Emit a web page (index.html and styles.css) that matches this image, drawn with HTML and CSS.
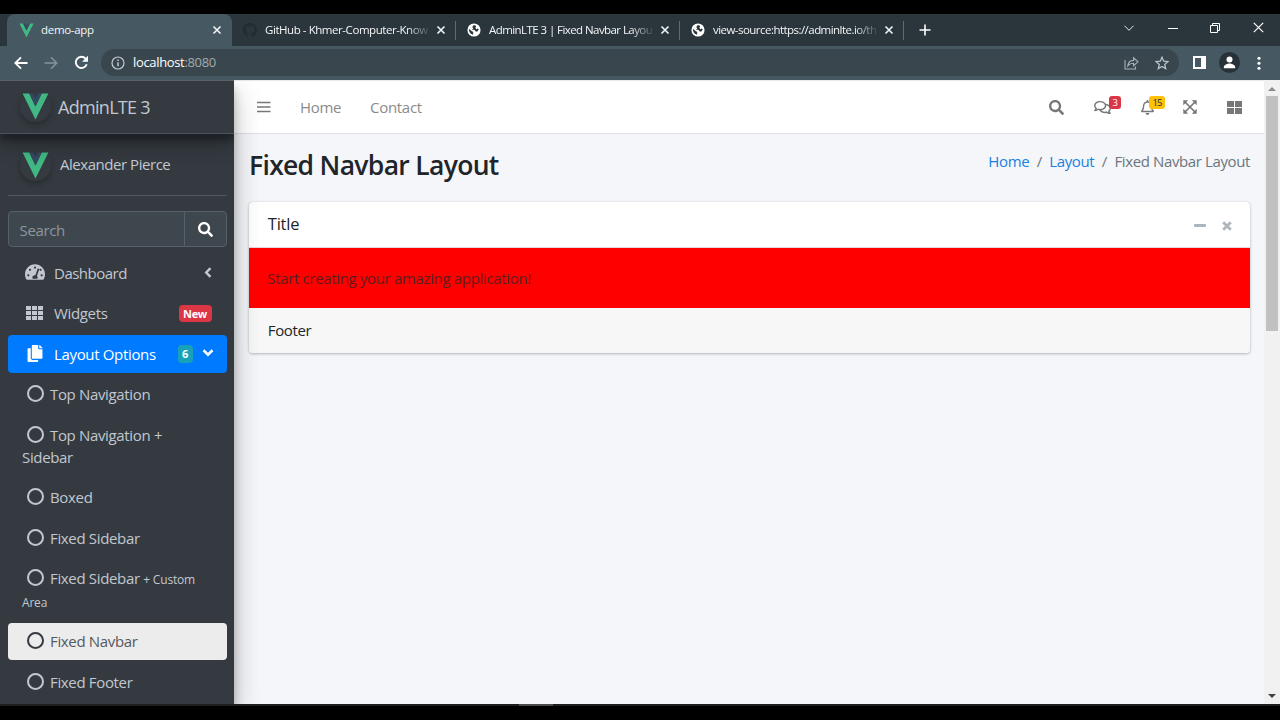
FILE: index.html
```html
<!DOCTYPE html>
<html lang="en">
<head>
<meta charset="utf-8">
<title>demo-app</title>
<link rel="stylesheet" href="styles.css">
</head>
<body>
<svg class="defs" width="0" height="0">
  <symbol id="vue" viewBox="0 0 30 30"><path d="M2.500 2.500h6.500l6 12.500 6-12.500h6.500L15 27.500z" fill="#41b883"/><path d="M9 2.500h3.500l2.500 4.500 2.500-4.500H21l-6 12.500z" fill="#34495e"/></symbol>
  <symbol id="x" viewBox="0 0 10 10"><path d="M1.500 1.500l7 7M8.500 1.500l-7 7" stroke="currentColor" stroke-width="1.600" fill="none"/></symbol>
  <symbol id="globe" viewBox="0 0 16 16"><circle cx="8" cy="8" r="7.500" fill="#fff"/><path d="M2.200 6.500l3.300 3 1.500.6v3.200C4 12.800 2 10.500 2.200 6.500zM7.500 2.600L6 4.700l1.300 1.500L5.500 7.300 8.700 8l1.200 1.800 2-.2 1.500-2.200-1.200-1-1.500.6-1.200-1.600 1-1.500-1.300-1.300z" fill="#29343a"/></symbol>
  <symbol id="search" viewBox="0 0 512 512"><path fill="currentColor" d="M505 442.700L405.300 343c-4.500-4.500-10.600-7-17-7H372c27.600-35.300 44-79.700 44-128C416 93.100 322.900 0 208 0S0 93.100 0 208s93.100 208 208 208c48.300 0 92.700-16.400 128-44v16.300c0 6.400 2.500 12.500 7 17l99.700 99.700c9.400 9.400 24.600 9.400 33.900 0l28.300-28.300c9.400-9.400 9.400-24.600.1-34zM208 336c-70.700 0-128-57.200-128-128 0-70.700 57.200-128 128-128 70.700 0 128 57.200 128 128 0 70.700-57.200 128-128 128z"/></symbol>
</svg>

<header class="browser">
  <div class="tabstrip">
    <div class="tab active">
      <svg class="fav big" viewBox="0 0 30 30"><use href="#vue"/></svg><span class="tab-title t1">demo-app</span><svg class="close"><use href="#x"/></svg>
    </div>
    <div class="tab w2">
      <svg class="fav" viewBox="0 0 16 16"><path fill="#222b30" d="M8 0C3.580 0 0 3.580 0 8c0 3.540 2.290 6.530 5.470 7.590.4.070.55-.17.55-.38 0-.19-.01-.82-.01-1.490-2.010.37-2.530-.49-2.690-.94-.09-.23-.48-.94-.82-1.130-.28-.15-.68-.52-.01-.53.63-.01 1.080.58 1.230.82.72 1.210 1.870.87 2.330.66.07-.52.28-.87.51-1.070-1.780-.2-3.640-.89-3.640-3.950 0-.87.31-1.590.82-2.150-.08-.2-.36-1.020.08-2.120 0 0 .67-.21 2.200.82.64-.18 1.320-.27 2-.27s1.360.09 2 .27c1.530-1.040 2.200-.82 2.200-.82.44 1.100.16 1.920.08 2.120.51.56.82 1.270.82 2.150 0 3.070-1.870 3.750-3.650 3.950.29.25.54.73.54 1.480 0 1.070-.01 1.930-.01 2.200 0 .21.15.46.55.38A8 8 0 0 0 16 8c0-4.420-3.580-8-8-8z"/></svg><span class="tab-title fade t2">GitHub - Khmer-Computer-Know</span><svg class="close"><use href="#x"/></svg>
    </div>
    <div class="tab w3">
      <svg class="fav"><use href="#globe"/></svg><span class="tab-title fade t3">AdminLTE 3 | Fixed Navbar Layou</span><svg class="close"><use href="#x"/></svg>
    </div>
    <div class="tab w4">
      <svg class="fav"><use href="#globe"/></svg><span class="tab-title fade t4">view-source:https://adminlte.io/th</span><svg class="close"><use href="#x"/></svg>
    </div>
    <svg class="plus" viewBox="0 0 12 12"><path d="M6 .5v11M.5 6h11" stroke="#fff" stroke-width="1.600"/></svg>
    <div class="window">
      <svg width="12" height="8" viewBox="0 0 12 8"><path d="M1.500 1.800l4.500 4.500 4.500-4.500" fill="none" stroke="#e8eaeb" stroke-width="1"/></svg>
      <svg width="10" height="10" viewBox="0 0 10 10"><path d="M0 5.500h10" stroke="#fff"/></svg>
      <svg width="10" height="10" viewBox="0 0 10 10"><path d="M.5 2.500h7v7h-7zM2.500 2V.5h7v7H8" fill="none" stroke="#fff"/></svg>
      <svg width="11" height="11" viewBox="0 0 11 11"><path d="M.8.8l9.400 9.400M10.200.8L.8 10.200" stroke="#fff" stroke-width="1.200"/></svg>
    </div>
  </div>
  <div class="toolbar">
    <svg width="14" height="14" viewBox="0 0 14 14"><path d="M13.500 7H1.500M7 1.300L1.300 7 7 12.700" fill="none" stroke="#fff" stroke-width="1.800"/></svg>
    <svg width="14" height="14" viewBox="0 0 14 14"><path d="M.5 7h12M7 1.300L12.700 7 7 12.700" fill="none" stroke="#87939a" stroke-width="1.600"/></svg>
    <svg width="15" height="15" viewBox="0 0 15 15"><path d="M12.700 9.200A5.600 5.600 0 1 1 11.600 3.600" fill="none" stroke="#fff" stroke-width="1.900"/><path d="M14 .8v5.900H8.100z" fill="#fff"/></svg>
    <div class="omnibox">
      <svg width="14" height="14" viewBox="0 0 14 14"><circle cx="7" cy="7" r="6" fill="none" stroke="#c3c9cc" stroke-width="1.200"/><path d="M7 6.200v4M7 3.500v1.600" stroke="#c3c9cc" stroke-width="1.500"/></svg>
      <span class="url">localhost<span class="port">:8080</span></span>
      <svg class="share" width="15" height="14" viewBox="0 0 15 14"><path d="M1 4v9h10.500v-2.500M3.800 9.800c.4-3.600 2.400-5.300 5.800-5.400V1.800l4.400 4-4.400 3.900V7.200C7 7.200 5.200 8 3.800 9.800z" fill="none" stroke="#aab3b7" stroke-width="1.100"/></svg>
      <svg width="14" height="14" viewBox="0 0 14 14"><path d="M7 1.200l1.700 4 4.300.4-3.300 2.800 1 4.200L7 10.400l-3.700 2.200 1-4.200L1 5.600l4.300-.4z" fill="none" stroke="#bbc2c6" stroke-width="1.300"/></svg>
    </div>
    <svg class="panel" width="13" height="13" viewBox="0 0 13 13"><path d="M0 0h13v13H0zM2 2v9h6V2z" fill="#fff" fill-rule="evenodd"/></svg>
    <svg class="avatar" width="21" height="21" viewBox="0 0 21 21"><circle cx="10.500" cy="10.500" r="10.500" fill="#263138"/><circle cx="10.500" cy="7.500" r="3" fill="#fff"/><path d="M4.800 15.500c0-3 3.800-4 5.700-4s5.700 1 5.700 4v.7H4.800z" fill="#fff"/></svg>
    <svg class="dots" width="4" height="14" viewBox="0 0 4 14"><g fill="#fff"><circle cx="2" cy="2.200" r="1.550"/><circle cx="2" cy="7.200" r="1.550"/><circle cx="2" cy="12.200" r="1.550"/></g></svg>
  </div>
</header>

<div class="page">
  <aside class="sidebar">
    <div class="brand"><svg class="logo"><use href="#vue"/></svg><span>AdminLTE 3</span></div>
    <div class="side-body">
      <div class="user"><svg class="logo"><use href="#vue"/></svg><span>Alexander Pierce</span></div>
      <div class="search"><span class="field">Search</span><span class="go"><svg width="15" height="15"><use href="#search"/></svg></span></div>
      <nav class="menu">
        <a class="item"><svg class="ico" width="20" height="18" viewBox="0 0 576 512"><path fill="currentColor" fill-rule="evenodd" d="M288 32C128.940 32 0 160.940 0 320c0 52.800 14.250 102.260 39.060 144.800 5.610 9.620 16.300 15.200 27.440 15.200h443c11.140 0 21.830-5.580 27.440-15.200C561.750 422.260 576 372.800 576 320c0-159.060-128.940-288-288-288zM288 96a32 32 0 1 1 0 64 32 32 0 0 1 0-64zM96 384a32 32 0 1 1 0-64 32 32 0 0 1 0 64zM144 224a32 32 0 1 1 0-64 32 32 0 0 1 0 64zM391 156a24 24 0 0 1 15 30l-61 184c15 14 25 34 18 62-4 10-8 16-8 16H221s-5-8-7-16c-10-40 20-79 63-80h22l61-182a24 24 0 0 1 31-14zM448 224a32 32 0 1 1 0-64 32 32 0 0 1 0 64zM480 384a32 32 0 1 1 0-64 32 32 0 0 1 0 64z"/></svg><span class="m1">Dashboard</span><svg class="arrow" width="8" height="11" viewBox="0 0 8 11"><path d="M6.500 1.200L2.200 5.500l4.300 4.300" fill="none" stroke="currentColor" stroke-width="2.400"/></svg></a>
        <a class="item"><svg class="ico" width="20" height="16" viewBox="0 0 20 16"><path fill="currentColor" d="M1 1h5v4H1zM7 1h5v4H7zM13 1h5v4h-5zM1 6h5v4H1zM7 6h5v4H7zM13 6h5v4h-5zM1 11h5v4H1zM7 11h5v4H7zM13 11h5v4h-5z"/></svg><span class="m2">Widgets</span><b class="badge new">New</b></a>
        <a class="item on"><svg class="ico" width="20" height="17" viewBox="0 0 448 512"><path fill="currentColor" d="M320 448v40c0 13.255-10.745 24-24 24H24c-13.255 0-24-10.745-24-24V120c0-13.255 10.745-24 24-24h72v296c0 30.879 25.121 56 56 56h168zm0-344V0H152c-13.255 0-24 10.745-24 24v368c0 13.255 10.745 24 24 24h272c13.255 0 24-10.745 24-24V128H344c-13.200 0-24-10.800-24-24zm120.971-31.029L375.029 7.029A24 24 0 0 0 358.059 0H352v96h96v-6.059a24 24 0 0 0-7.029-16.970z"/></svg><span class="m3">Layout Options</span><b class="badge six">6</b><svg class="arrow down" width="12" height="8" viewBox="0 0 12 8"><path d="M1.500 1.300L6 5.600l4.500-4.300" fill="none" stroke="currentColor" stroke-width="2.600"/></svg></a>
        <a class="item sub"><i class="ring"></i><span>Top Navigation</span></a>
        <a class="item sub"><i class="ring"></i><span>Top Navigation +<br>Sidebar</span></a>
        <a class="item sub"><i class="ring"></i><span>Boxed</span></a>
        <a class="item sub"><i class="ring"></i><span>Fixed Sidebar</span></a>
        <a class="item sub"><i class="ring"></i><span>Fixed Sidebar <small>+ Custom<br>Area</small></span></a>
        <a class="item sub current"><i class="ring"></i><span>Fixed Navbar</span></a>
        <a class="item sub"><i class="ring"></i><span>Fixed Footer</span></a>
      </nav>
    </div>
  </aside>

  <main class="main">
    <nav class="navbar">
      <svg class="bars" width="14" height="13" viewBox="0 0 14 13"><path d="M0 1.500h13.500M0 6h13.500M0 10.500h13.500" stroke="currentColor" stroke-width="1.700"/></svg>
      <a class="n-home">Home</a><a class="n-contact">Contact</a>
      <div class="tools">
        <svg width="15" height="15"><use href="#search"/></svg>
        <span class="notify"><svg width="17" height="15" viewBox="0 0 576 512"><path fill="currentColor" d="M532 386.200c27.500-27.100 44-61.100 44-98.200 0-80-76.500-146.100-176.200-157.900C368.300 72.500 294.300 32 208 32 93.100 32 0 103.600 0 192c0 37 16.500 71 44 98.200-15.300 30.700-37.300 54.500-37.700 54.900-6.300 6.700-8.100 16.500-4.400 25 3.600 8.500 12 14 21.200 14 53.500 0 96.700-20.200 125.200-38.800 9.200 2.100 18.700 3.700 28.400 4.900C208.100 407.600 281.800 448 368 448c20.800 0 40.800-2.400 59.800-6.800C456.300 459.700 499.400 480 553 480c9.200 0 17.500-5.500 21.200-14 3.600-8.500 1.900-18.300-4.400-25-.4-.3-22.500-24.100-37.800-54.800zm-392.800-92.300L122.100 305c-14.100 9.100-28.500 16.300-43.100 21.400 2.700-4.700 5.400-9.700 8-14.800l15.500-31.100L77.700 256C64.200 242.600 48 220.700 48 192c0-60.700 73.300-112 160-112s160 51.300 160 112-73.300 112-160 112c-16.500 0-33-1.900-49-5.600l-19.800-4.500zM498.300 352l-24.700 24.400 15.500 31.100c2.600 5.100 5.300 10.100 8 14.800-14.600-5.100-29-12.300-43.100-21.400l-17.100-11.100-19.900 4.600c-16 3.700-32.500 5.600-49 5.600-54 0-102.200-20.100-131.300-49.700C338 339.500 416 272.900 416 192c0-3.400-.4-6.700-.7-10C479.700 196.500 528 238.800 528 288c0 28.700-16.200 50.600-29.700 64z"/></svg><b class="pip red">3</b></span>
        <span class="notify bell"><svg width="13" height="15" viewBox="0 0 448 512"><path fill="currentColor" d="M439.390 362.290c-19.320-20.760-55.470-51.990-55.470-154.290 0-77.700-54.480-139.900-127.940-155.160V32c0-17.670-14.320-32-31.980-32s-31.980 14.330-31.980 32v20.840C118.560 68.100 64.080 130.300 64.080 208c0 102.300-36.150 133.530-55.470 154.290-6 6.450-8.660 14.160-8.610 21.710.11 16.400 12.980 32 32.100 32h383.800c19.120 0 32-15.600 32.100-32 .05-7.550-2.610-15.270-8.610-21.710zM67.530 368c21.220-27.970 44.420-74.330 44.530-159.420 0-.2-.06-.38-.06-.58 0-61.860 50.140-112 112-112s112 50.140 112 112c0 .2-.06.38-.06.58.11 85.100 23.310 131.460 44.530 159.420H67.530zM224 512c35.320 0 63.970-28.650 63.970-64H160.030c0 35.350 28.650 64 63.970 64z"/></svg><b class="pip yellow">15</b></span>
        <svg class="expand" width="14" height="14" viewBox="0 0 14 14"><path d="M2 2l10 10M12 2L2 12" stroke="currentColor" stroke-width="1.700"/><path fill="currentColor" d="M.3.3h4.900L.3 5.200zM13.700.3v4.900L8.800.3zM.3 13.700V8.800l4.900 4.900zM13.700 13.700H8.800l4.900-4.900z"/></svg>
        <svg class="grid" width="15" height="13" viewBox="0 0 15 13"><path fill="currentColor" d="M0 0h7v6H0zM8 0h7v6H8zM0 7h7v6H0zM8 7h7v6H8z"/></svg>
      </div>
    </nav>
    <section class="content">
      <div class="head">
        <h1>Fixed Navbar Layout</h1>
        <div class="crumbs"><a class="c1">Home</a><span class="slash">/</span><a class="c2">Layout</a><span class="slash">/</span><span class="c3">Fixed Navbar Layout</span></div>
      </div>
      <div class="card">
        <div class="card-head"><span class="c-title">Title</span><svg class="minus" width="12" height="3"><rect width="12" height="3" rx="1" fill="#adb5bd"/></svg><svg class="card-x" width="10" height="10" viewBox="0 0 10 10"><path d="M1.200 1.200l7.600 7.600M8.800 1.200L1.200 8.800" stroke="#adb5bd" stroke-width="2.800"/></svg></div>
        <div class="card-body"><span class="c-body">Start creating your amazing application!</span></div>
        <div class="card-foot"><span class="c-foot">Footer</span></div>
      </div>
    </section>
  </main>
  <div class="scrollbar"><i class="up"></i><i class="thumb"></i><i class="dn"></i></div>
</div>
<footer class="taskbar"><i></i></footer>
</body>
</html>
```
FILE: styles.css
```css
* { box-sizing: border-box; }
body { margin: 0; width: 1280px; height: 720px; overflow: hidden; background: #000; padding-top: 14px; font: 15px/22.5px "Open Sans", "Noto Sans", sans-serif; letter-spacing: -0.34px; color: #212529; }
svg { display: block; flex: none; }
.defs { position: absolute; }
span, a, b, h1 { white-space: nowrap; }

.browser { height: 66px; background: #465962; }
.tabstrip { height: 32px; display: flex; align-items: center; background: #2b363c; padding-left: 7px; }
.tab { position: relative; height: 32px; width: 225px; display: flex; align-items: center; color: #f4f5f6; font-size: 11.5px; letter-spacing: -0.44px; padding: 0 10px 0 12px; }
.tab.active { background: #465962; border-radius: 8px 8px 0 0; letter-spacing: -0.3px; }
.fav { width: 14px; height: 14px; margin-right: 8px; }
.big { width: 17px; height: 17px; margin: 0 6px 0 -1px; }
.w2, .w3, .w4 { height: 19px; border-right: 1px solid #606b71; }
.w2 { width: 224px; padding-left: 11px; padding-right: 9px; }
.w3 { width: 224px; padding-left: 11px; padding-right: 9px; letter-spacing: -.57px; }
.w4 { width: 224px; padding-right: 9px; padding-left: 11px; letter-spacing: -.54px; }
.tab-title { flex: 1; overflow: hidden; }
.fade { -webkit-mask-image: linear-gradient(90deg, #000 87%, transparent 102%); mask-image: linear-gradient(90deg, #000 87%, transparent 102%); }
.close { width: 10px; height: 10px; margin-left: 8px; color: #f2f4f5; }
.plus { width: 12px; height: 12px; margin-left: 15px; }
.window { margin-left: auto; display: flex; align-items: center; justify-content: space-between; width: 141px; margin-right: 16px; padding-bottom: 5px; }
.toolbar { height: 34px; display: flex; align-items: center; padding: 0 18px 1px 14px; gap: 16px; }
.omnibox { height: 27px; width: 1078px; margin-left: -4px; border-radius: 14px; background: #39464d; display: flex; align-items: center; padding: 0 10px; }
.url { margin-left: 8px; color: #fff; font-size: 13px; letter-spacing: -0.34px; flex: 1; }
.port { color: #a1aaaf; }
.share { margin-right: 16px; }
.panel { margin-left: -2px; }
.avatar { margin: 0 0 0 -3px; }
.dots { margin-left: 1px; }

.page { display: flex; height: 624px; background: #f4f6f9; }
.sidebar { position: relative; z-index: 2; width: 234px; height: 624px; overflow: hidden; background: #343a40; color: #c2c7d0; box-shadow: 0 13px 26px rgba(0,0,0,.25), 0 9px 9px rgba(0,0,0,.22); clip-path: inset(0 -40px 0 0); }
.brand { position: relative; height: 54px; border-bottom: 1px solid #4b545c; border-top: 1px solid #59646a; display: flex; align-items: center; padding-left: 20px; font-size: 18px; letter-spacing: -0.7px; box-shadow: 0 10px 20px rgba(0,0,0,.3), 0 6px 6px rgba(0,0,0,.25); background: #343a40; }
.logo { width: 31px; height: 31px; border-radius: 50%; margin-right: 7px; margin-top: -2px; box-shadow: 0 3px 6px rgba(0,0,0,.25); overflow: visible; }
.side-body { padding: 0 7.5px; }
.user { height: 62px; display: flex; align-items: center; padding: 0 0 0 12.5px; border-bottom: 1px solid #4f5962; letter-spacing: -.46px; }
.user .logo { margin: 1px 9px 0 0; }
.search { display: flex; height: 36px; margin: 15px 0 7.5px; background: #3f474e; border: 1px solid #56606a; border-radius: 4px; color: #8e959c; align-items: center; }
.field { flex: 1; padding: 2px 0 0 11px; }
.go { width: 42px; height: 34px; border-left: 1px solid #56606a; color: #fff; display: flex; align-items: center; justify-content: center; }
.item { display: flex; align-items: center; position: relative; padding: 7.5px 15px 7.5px 14.5px; margin-bottom: 2.9px; border-radius: 4px; }
.item .ico { margin: -2px 9px 0 3px; }
.on { background: #007bff; color: #fff; }
.m1 { letter-spacing: -.5px; }
.arrow { margin-left: auto; margin-top: -2px; }
.badge { font-size: 11px; line-height: 11.250px; padding: 3px 4.500px; border-radius: 4px; color: #fff; letter-spacing: -.3px; }
.new { background: #dc3545; margin-left: auto; }
.six { background: #17a2b8; margin-left: auto; }
.down { margin-left: 9px; margin-right: -2px; }
.sub { display: block; }
.ring { display: inline-block; vertical-align: -2px; width: 17px; height: 17px; border: 2px solid currentColor; border-radius: 50%; margin: 0 6px 0 5px; }
small { font-size: 12px; line-height: 0; letter-spacing: -.2px; }
.current { background: #ececed; color: #55595d; }
.current .ring { border-color: #343a40; }

.main { flex: 1; min-width: 0; }
.navbar { height: 54px; background: #fff; border-bottom: 1px solid #dee2e6; border-top: 1px solid #e7eaec; display: flex; align-items: center; color: #8a8a8a; padding: 0 22px 0 23px; }
.bars { color: #777; }
.n-home { margin-left: 29px; }
.n-contact { margin-left: 29px; letter-spacing: -.3px; }
.tools { margin-left: auto; display: flex; align-items: center; color: #777; }
.notify { position: relative; margin-left: 30px; }
.pip { position: absolute; top: -4px; left: 15px; height: 13px; padding: 0 3.500px; border-radius: 3px; font-size: 9.5px; line-height: 13px; font-weight: 400; color: #fff; }
.red { background: #dc3545; }
.yellow { background: #ffc107; color: #1f2d3d; left: 8px; letter-spacing: -.9px; }
.expand { margin-left: 29px; }
.grid { margin-left: 30px; }
.content { padding: 0 14px 0 15px; }
.head { display: flex; justify-content: space-between; height: 68px; }
h1 { margin: 13px 0 0; font-size: 26.5px; line-height: 36px; font-weight: 600; letter-spacing: -.69px; }
.crumbs { display: flex; color: #6c757d; margin-top: 16px; height: 23px; letter-spacing: -.38px; }
.crumbs a { color: #1a7fe0; }
.slash { margin: 0 7.500px; }
.card { border-radius: 4px; overflow: hidden; box-shadow: 0 0 1px rgba(0,0,0,.2), 0 1px 3px rgba(0,0,0,.25); background: #fff; }
.card-head { height: 46px; display: flex; align-items: center; padding: 0 18px 0 18.750px; border-bottom: 1px solid #ead5d8; font-size: 16.500px; letter-spacing: -.2px; }
.c-title { flex: 1; }
.minus { margin-top: 2px; }
.card-x { margin: 2px 0 0 16px; }
.card-body { height: 60px; background: #f00; padding: 19px 18.750px; color: #212529; }
.card-body span { opacity: .75; }
.card-foot { height: 45px; background: #f7f7f7; padding: 11px 18.750px; }
.scrollbar { width: 16px; background: #f1f1f1; display: flex; flex-direction: column; align-items: center; }
.up { border: 4px solid transparent; border-top: 0; border-bottom: 4px solid #8c8c8c; margin: 7px 0 5px; }
.thumb { width: 12px; height: 235px; background: #c1c1c1; }
.dn { border: 4px solid transparent; border-bottom: 0; border-top: 4px solid #404040; margin: auto 0 6px; }
.taskbar { height: 2px; background: #1e1e1e; padding-left: 519px; }
.taskbar i { display: block; width: 34px; height: 2px; background: #4a4a4a; }
```
